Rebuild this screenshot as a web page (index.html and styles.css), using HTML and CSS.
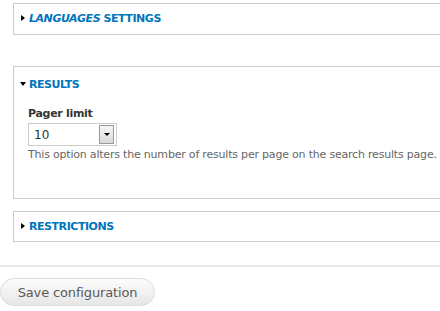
FILE: index.html
```html
<!DOCTYPE html>
<html>
<head>
<meta charset="utf-8">
<link rel="stylesheet" href="styles.css">
</head>
<body>
<div class="page">
  <div class="fieldset first">
    <div class="legend"><span class="tri right"></span><a class="title"><em>Languages</em> settings</a></div>
  </div>
  <div class="fieldset open">
    <div class="legend"><span class="tri down"></span><a class="title">Results</a></div>
    <div class="body">
      <label class="label">Pager limit</label>
      <div class="select"><span class="val">10</span><span class="arrow"><span class="tri down small"></span></span></div>
      <div class="desc">This option alters the number of results per page on the search results page.</div>
    </div>
  </div>
  <div class="fieldset last">
    <div class="legend"><span class="tri right"></span><a class="title">Restrictions</a></div>
  </div>
</div>
<div class="actions">
  <button class="btn">Save configuration</button>
</div>
</body>
</html>
```
FILE: styles.css
```css
html, body { margin: 0; padding: 0; background: #fff; overflow: hidden; }
body { font-family: "DejaVu Sans", Verdana, sans-serif; font-size: 12px; color: #333; width: 440px; }
.page { padding: 3px 0 0 13px; }
.fieldset { border: 1px solid #ccc; border-right: none; width: 460px; box-sizing: border-box; }
.fieldset.first { padding: 6px 0 8px 6px; margin-bottom: 31px; }
.fieldset.open { padding: 9px 0 36px 6px; margin-bottom: 12px; }
.fieldset.last { padding: 6px 0 7px 6px; }
.legend { display: flex; align-items: center; height: 16px; }
.tri { display: inline-block; width: 0; height: 0; margin-right: 4px; }
.tri.right { border-top: 3px solid transparent; border-bottom: 3px solid transparent; border-left: 4px solid #000; margin-left: 1px; }
.tri.down { border-left: 3px solid transparent; border-right: 3px solid transparent; border-top: 4px solid #000; margin-left: 0; margin-right: 3px; }
.title { color: #0074bd; font-weight: bold; text-transform: uppercase; font-size: 11px; letter-spacing: -0.45px; }
.title em { font-style: italic; }
.body { padding: 14px 0 0 8px; }
.label { display: block; font-weight: bold; font-size: 11px; letter-spacing: -0.3px; color: #333; line-height: 16px; }
.select { margin-top: 1px; width: 89px; height: 23px; box-sizing: border-box; border: 1px solid #ccc; display: flex; align-items: center; justify-content: space-between; padding: 0 2px 0 5px; background: #fff; }
.val { font-size: 12px; color: #333; }
.arrow { width: 15px; height: 19px; box-sizing: border-box; border: 1px solid #999; background: linear-gradient(#f6f6f6, #d9d9d9); display: flex; align-items: center; justify-content: center; }
.tri.small { margin: 0; border-left-width: 3px; border-right-width: 3px; border-top-width: 3px; }
.desc { margin-top: 2px; font-size: 11px; letter-spacing: -0.2px; color: #666; line-height: 14px; white-space: nowrap; }
.actions { margin-top: 23px; border-top: 2px solid #e9e9e9; padding-top: 11px; }
.btn { font-family: "DejaVu Sans", Verdana, sans-serif; font-size: 13px; letter-spacing: -0.15px; color: #5a5a5a; background: linear-gradient(#fdfdfd, #e6e6e6); border: 1px solid #dcdcdc; border-radius: 15px; height: 28px; width: 155px; padding: 0; margin: 0; }
```
